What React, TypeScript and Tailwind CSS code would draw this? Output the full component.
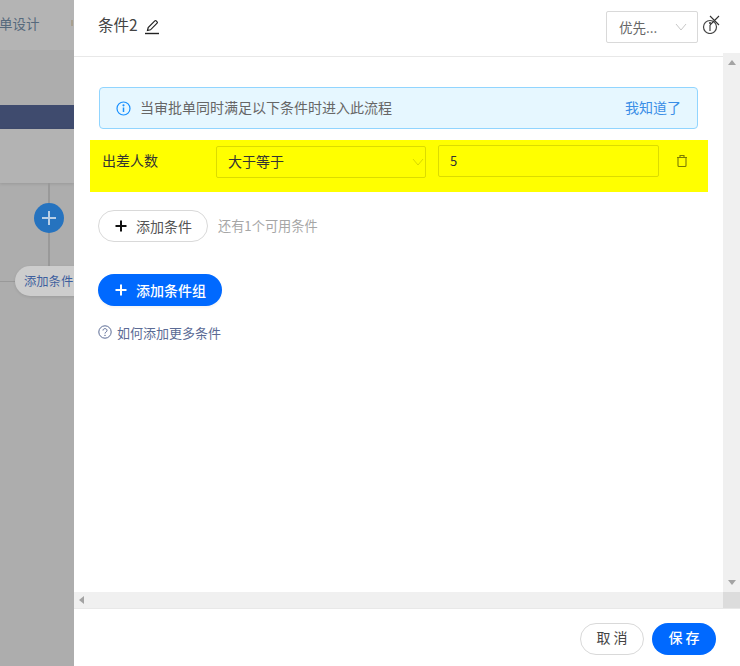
import React from "react";

const font = { fontFamily: '"Noto Sans CJK SC", "Noto Sans", sans-serif' };

function Backdrop() {
  return (
    <div className="relative w-[74px] shrink-0 flex flex-col overflow-hidden bg-[#adadad]">
      <div className="h-[50px] shrink-0 bg-[#b4b4b4] flex items-start">
        <span className="text-[13.5px] text-[#56697c] ml-[-1px] whitespace-nowrap leading-[46px] h-[46px]">单设计</span>
        <span className="ml-[31px] mt-[20px] w-[2px] h-[6px] bg-[#a8a090]" />
      </div>
      <div className="h-[55px] shrink-0 bg-[#adadad]" />
      <div className="h-[24px] shrink-0 bg-[#3f4b6e]" />
      <div className="h-[54px] shrink-0 bg-[#b3b3b3] shadow-[0_1px_3px_rgba(0,0,0,0.12)]" />
      <div className="absolute left-[48px] top-[183px] w-[2px] h-[84px] bg-[#999999]" />
      <div className="absolute left-0 top-[281px] w-[16px] h-[1px] bg-[#999999]" />
      <div className="absolute left-[34px] top-[203px] w-[30px] h-[30px] rounded-full bg-[#2673bf] flex items-center justify-center">
        <svg width="16" height="16" viewBox="0 0 16 16"><path d="M8 1v14M1 8h14" stroke="#b9cfe6" strokeWidth="2" fill="none" /></svg>
      </div>
      <div className="absolute left-[15px] top-[266px] w-[80px] h-[30px] rounded-[15px] bg-[#cdcdcd] shadow-[0_1px_3px_rgba(0,0,0,0.1)] text-[12.3px] leading-[30px] pl-[9px] text-[#3e5f9e] whitespace-nowrap">添加条件</div>
    </div>
  );
}

function Header() {
  return (
    <div className="h-[57px] shrink-0 border-b border-[#e8e8e8] flex items-center pl-[24px] pr-[42px] bg-white">
      <span className="text-[15.5px] text-[#444444] leading-none mt-[-4px] pb-[2px]">条件2</span>
      <svg className="ml-[6px] mt-[-3px]" width="16" height="16" viewBox="0 0 16 16" fill="none" stroke="#222" strokeWidth="1.2">
        <path d="M3.5 11.5l.7-3L10.8 1.9a1 1 0 0 1 1.4 0l.9.9a1 1 0 0 1 0 1.4L6.5 10.8z" />
        <path d="M1 14.5h14" strokeWidth="1.4" />
      </svg>
      <div className="ml-auto w-[92px] h-[32px] mt-[-2px] border border-[#d9d9d9] rounded-[2px] flex items-center pl-[12px] pr-[10px] text-[13.5px] text-[#666666]">
        <span>优先...</span>
        <svg className="ml-auto" width="12" height="8" viewBox="0 0 12 8" fill="none" stroke="#c8c8c8" strokeWidth="1"><path d="M1 1l5 6 5-6" /></svg>
      </div>
    </div>
  );
}

function CloseOverlay() {
  return (
    <>
      <svg className="absolute left-[702px] top-[18px]" width="16" height="16" viewBox="0 0 16 16" fill="none" stroke="#444" strokeWidth="1.2">
        <circle cx="8" cy="9" r="6.5" />
        <path d="M8 7v6" />
        <circle cx="8" cy="5" r="0.5" />
      </svg>
      <svg className="absolute left-[708px] top-[14px]" width="14" height="14" viewBox="0 0 14 14" fill="none" stroke="#333" strokeWidth="1.1">
        <path d="M2 2l9 9M11 2l-9 9" />
      </svg>
    </>
  );
}

function Content() {
  return (
    <div className="flex-1 bg-white pt-[30px] min-h-0">
      <div className="ml-[25px] w-[599px] h-[42px] border border-[#91d5ff] rounded-[4px] bg-[#e6f7ff] flex items-center pl-[16px] pr-[16px]">
        <svg width="15" height="15" viewBox="0 0 15 15" fill="none" stroke="#1890ff" strokeWidth="1.2">
          <circle cx="7.5" cy="7.5" r="6.5" />
          <path d="M7.5 6.5v4.5" strokeWidth="1.5" />
          <circle cx="7.5" cy="4.3" r="0.5" fill="#1890ff" />
        </svg>
        <span className="ml-[9px] text-[14px] text-[#666666] leading-none pb-[2px]">当审批单同时满足以下条件时进入此流程</span>
        <span className="ml-auto text-[14px] text-[#3a8ee6] leading-none pb-[2px]">我知道了</span>
      </div>
      <div className="ml-[16px] mt-[11px] w-[618px] h-[52px] bg-[#ffff00] flex items-center pl-[12px]">
        <span className="w-[114px] shrink-0 text-[14px] text-[#333333] mt-[-12px]">出差人数</span>
        <div className="w-[210px] h-[32px] border border-[#dcdc00] rounded-[2px] flex items-center pl-[11px] pr-[1px] text-[14px] text-[#333333] mt-[-8px]">
          <span className="pb-[2px]">大于等于</span>
          <svg className="ml-auto" width="12" height="8" viewBox="0 0 12 8" fill="none" stroke="#d8d800" strokeWidth="1"><path d="M1 1l5 6 5-6" /></svg>
        </div>
        <div className="ml-[12px] w-[221px] h-[32px] border border-[#dcdc00] rounded-[2px] flex items-center pl-[11px] text-[13px] text-[#333333] mt-[-10px]">5</div>
        <svg className="ml-[16px] mt-[-11px]" width="14" height="14" viewBox="0 0 14 14" fill="none" stroke="#7d7d00" strokeWidth="1.1">
          <path d="M2 3.5h10M5 3.5V1.5h4v2M3 3.5v8a1 1 0 0 0 1 1h6a1 1 0 0 0 1-1v-8" />
        </svg>
      </div>
      <div className="ml-[24px] mt-[18px] flex items-center">
        <div className="w-[110px] h-[32px] rounded-[16px] border border-[#d9d9d9] flex items-center pl-[16px] bg-white">
          <svg width="12" height="12" viewBox="0 0 12 12"><path d="M6 0.5v11M0.5 6h11" stroke="#111" strokeWidth="2" fill="none" /></svg>
          <span className="ml-[9px] text-[14px] text-[#555555] leading-none pb-[1px]">添加条件</span>
        </div>
        <span className="ml-[10px] text-[13.2px] text-[#a6a6a6] leading-none">还有1个可用条件</span>
      </div>
      <div className="ml-[24px] mt-[32px] w-[124px] h-[32px] rounded-[16px] bg-[#0069ff] flex items-center pl-[17px] shadow-[0_2px_2px_rgba(0,0,0,0.04)]">
        <svg width="12" height="12" viewBox="0 0 12 12"><path d="M6 0.5v11M0.5 6h11" stroke="#fff" strokeWidth="2" fill="none" /></svg>
        <span className="ml-[9px] text-[14px] font-medium text-white leading-none pb-[1px]">添加条件组</span>
      </div>
      <div className="ml-[24px] mt-[19px] flex items-center text-[#5b6b95]">
        <svg width="14" height="14" viewBox="0 0 14 14" fill="none" stroke="#5b6b95" strokeWidth="1">
          <circle cx="7" cy="7" r="6.2" />
          <path d="M5 5.5c0-2.5 4-2.5 4 0 0 1.5-2 1.5-2 3" />
          <circle cx="7" cy="10.3" r="0.3" />
        </svg>
        <span className="ml-[5px] text-[13px] leading-none">如何添加更多条件</span>
      </div>
    </div>
  );
}

function HScroll() {
  return (
    <div className="h-[16px] shrink-0 flex bg-[#f0f0f0]">
      <div className="flex-1 flex items-center justify-between pl-[5px] pr-[6px]">
        <span className="w-0 h-0 border-y-[4px] border-y-transparent border-r-[5px] border-r-[#a3a3a3]" />
        <span className="w-0 h-0 border-y-[4px] border-y-transparent border-l-[5px] border-l-[#a3a3a3]" />
      </div>
    </div>
  );
}

function VScroll() {
  return (
    <div className="absolute left-[723px] top-[53px] w-[17px] h-[555px] bg-[#f0f0f0] flex flex-col items-center justify-between">
      <span className="mt-[7px] w-0 h-0 border-x-[4px] border-x-transparent border-b-[5px] border-b-[#a3a3a3]" />
      <span className="mb-[23px] w-0 h-0 border-x-[4px] border-x-transparent border-t-[5px] border-t-[#a3a3a3]" />
      <span className="absolute left-0 bottom-0 w-[17px] h-[16px] bg-[#dcdcdc]" />
    </div>
  );
}

function Footer() {
  return (
    <div className="h-[58px] shrink-0 border-t border-[#e8e8e8] bg-white flex items-center justify-end pr-[24px] gap-[8px]">
      <div className="w-[64px] h-[32px] mt-[2px] rounded-[16px] border border-[#d9d9d9] flex items-center justify-center text-[14px] text-[#444444] tracking-[3px] pl-[3px] pb-[2px]">取消</div>
      <div className="w-[64px] h-[32px] mt-[2px] rounded-[16px] bg-[#0069ff] flex items-center justify-center text-[14px] font-medium text-white tracking-[3px] pl-[3px] pb-[2px]">保存</div>
    </div>
  );
}

export default function App() {
  return (
    <div className="relative w-[740px] h-[666px] overflow-hidden flex bg-white" style={font}>
      <Backdrop />
      <div className="flex-1 min-w-0 flex flex-col">
        <Header />
        <Content />
        <HScroll />
        <Footer />
      </div>
      <VScroll />
      <CloseOverlay />
    </div>
  );
}
